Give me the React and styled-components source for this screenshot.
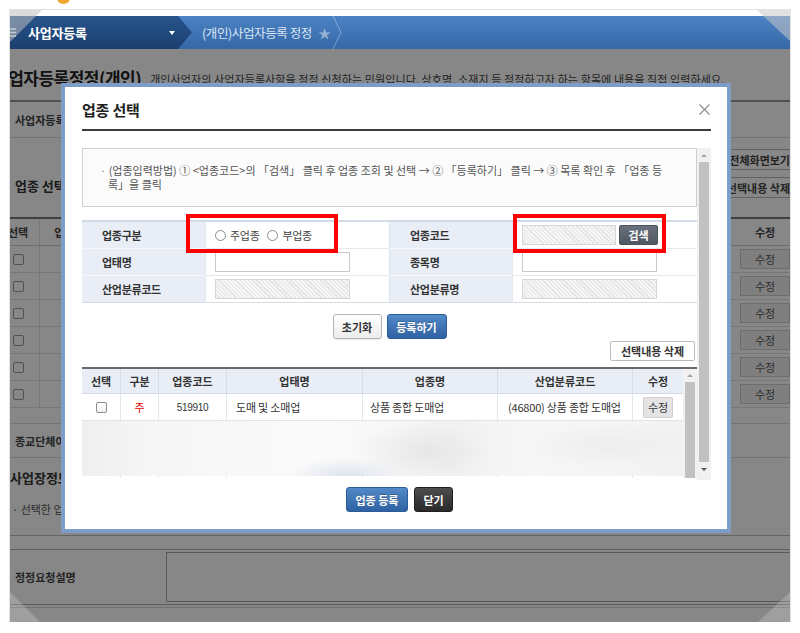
import React from 'react';
import styled, { createGlobalStyle, css } from 'styled-components';

const FONT = `'Noto Sans CJK KR', 'Noto Sans', 'Liberation Sans', sans-serif`;

const GlobalStyle = createGlobalStyle`
  html, body { margin: 0; padding: 0; background: #ffffff; }
  body { font-family: ${FONT}; color: #333; }
  *, *::before, *::after { box-sizing: border-box; }
  button { font-family: inherit; cursor: pointer; }
`;

const OrangeMark = styled.div`
  position: absolute;
  left: 57px;
  top: -8px;
  width: 13px;
  height: 12px;
  border-radius: 50%;
  background: #f2a533;
`;

const Frame = styled.div`
  position: relative;
  margin: 10px 0 0 10px;
  width: 780px;
  height: 612px;
  overflow: hidden;
  background: #fff;
  box-shadow: 0 0 0 1px #e2e2e2;
`;

const TopStrip = styled.div`
  height: 6px;
  background: #fff;
`;

/* ---------- header ---------- */
const HeaderBar = styled.div`
  display: flex;
  align-items: center;
  height: 33px;
  background: linear-gradient(#4b83c4, #3667a7);
`;

const MenuBlock = styled.div`
  display: flex;
  align-items: center;
  width: 182px;
  height: 100%;
  padding-right: 17px;
  background: linear-gradient(#27548c, #1b406f);
  clip-path: polygon(0 0, 168px 0, 182px 50%, 168px 100%, 0 100%);
  color: #fff;
`;

const Burger = styled.svg`
  margin-left: -4px;
  flex: none;
`;

const MenuTitle = styled.span`
  margin-left: 12px;
  font-size: 13px;
  font-weight: 700;
  letter-spacing: -0.2px;
`;

const Caret = styled.span`
  margin-left: auto;
  width: 0;
  height: 0;
  border-left: 3px solid transparent;
  border-right: 3px solid transparent;
  border-top: 4px solid #fff;
`;

const Crumb = styled.div`
  display: flex;
  align-items: center;
  height: 100%;
  margin-left: 10px;
  font-size: 12.5px;
  letter-spacing: -0.4px;
  color: #dbe6f4;
`;

const Star = styled.span`
  margin-left: 6px;
  font-size: 13px;
  color: rgba(255, 255, 255, 0.45);
`;

const CrumbChevron = styled.svg`
  margin-left: 1px;
  flex: none;
`;

/* ---------- background page ---------- */
const Page = styled.div`
  width: 790px;
  color: #444;
`;

const TitleRow = styled.div`
  display: flex;
  align-items: center;
  height: 53px;
  padding-top: 6px;
  border-bottom: 2px solid #9a9a9a;
`;

const PageTitle = styled.h1`
  margin: 0 0 0 -17px;
  font-size: 17px;
  font-weight: 700;
  letter-spacing: -0.5px;
  color: #222;
  white-space: nowrap;
`;

const PageDesc = styled.p`
  margin: 2px 0 0 9px;
  font-size: 11px;
  letter-spacing: 0.1px;
  white-space: nowrap;
  color: #444;
`;

const InfoRow = styled.div`
  display: flex;
  align-items: center;
  height: 36px;
  padding-left: 5px;
  border-bottom: 1px solid #dcdcdc;
`;

const RowLabel = styled.span`
  font-size: 11px;
  font-weight: 700;
  color: #444;
  white-space: nowrap;
`;

const SectionHead = styled.div`
  display: flex;
  justify-content: space-between;
  align-items: flex-start;
  height: 79px;
  padding: 11px 0 0 5px;
`;

const SectionTitle = styled.h2`
  margin: 28px 0 0;
  font-size: 13px;
  line-height: 18px;
  font-weight: 700;
  color: #333;
`;

const ButtonStack = styled.div`
  display: flex;
  flex-direction: column;
  align-items: flex-end;
  gap: 7px;
  margin-right: 3px;
`;

const GhostButton = styled.button`
  height: 21px;
  padding: 0 6px;
  border: 1px solid #b9b9b9;
  background: #fff;
  font-size: 11px;
  font-weight: 700;
  color: #444;
  white-space: nowrap;
`;

const BgGrid = styled.div`
  display: grid;
  grid-template-columns: 43px 70px 1fr 70px;
  width: 803px;
  margin-left: -13px;
  border-top: 2px solid #777;
`;

const BgCell = styled.div`
  display: flex;
  align-items: center;
  justify-content: center;
  height: 27px;
  border-bottom: 1px solid ${(p) => (p.$head ? '#cfcfcf' : '#e0e0e0')};
  border-right: ${(p) => (p.$last ? 'none' : '1px solid #e0e0e0')};
  font-size: 11px;
  font-weight: ${(p) => (p.$head ? 700 : 400)};
  color: #444;
`;

const BgCheck = styled.span`
  width: 11px;
  height: 11px;
  border: 1px solid #9a9a9a;
  border-radius: 2px;
  background: #fff;
`;

const BgEdit = styled.span`
  display: flex;
  align-items: center;
  justify-content: center;
  width: 50px;
  height: 20px;
  border: 1px solid #cfcfcf;
  background: #f0f0f0;
  font-size: 11px;
  color: #555;
`;

const ReligionRow = styled.div`
  display: flex;
  align-items: center;
  height: 35px;
  margin-top: 15px;
  padding-left: 5px;
  border-top: 1px solid #dcdcdc;
  border-bottom: 1px solid #dcdcdc;
`;

const SubTitle = styled.h3`
  margin: 0;
  height: 40px;
  line-height: 40px;
  font-size: 13px;
  font-weight: 700;
  color: #333;
`;

const BulletNote = styled.p`
  margin: 0;
  height: 22px;
  line-height: 22px;
  padding-left: 2px;
  font-size: 11px;
  color: #555;
  white-space: nowrap;
`;

const NoteSpacer = styled.div`
  height: 16px;
  border-bottom: 1px solid #bdbdbd;
`;

const ReqRow = styled.div`
  display: flex;
  align-items: center;
  height: 56px;
  margin-top: 13px;
  border-top: 1px solid #b0b0b0;
  border-bottom: 1px solid #b0b0b0;
`;

const ReqLabel = styled.span`
  width: 156px;
  padding-left: 5px;
  font-size: 11px;
  font-weight: 700;
  color: #444;
`;

const ReqBox = styled.div`
  flex: 1;
  height: 50px;
  border: 1px solid #a8a8a8;
  background: #fff;
`;

const BottomLine = styled.div`
  margin-top: 2px;
  border-top: 1px solid #d6d6d6;
`;

const Dim = styled.div`
  position: absolute;
  left: 0;
  right: 0;
  top: 39px;
  bottom: 0;
  background: rgba(0, 0, 0, 0.47);
`;

/* ---------- modal ---------- */
const Modal = styled.div`
  position: absolute;
  left: 51px;
  top: 73px;
  width: 670px;
  height: 450px;
  display: flex;
  flex-direction: column;
  padding: 0 16px 0 17px;
  border: 4px solid #7d9dc9;
  background: #fff;
`;

const ModalHeader = styled.div`
  display: flex;
  align-items: center;
  justify-content: space-between;
  height: 44px;
  padding-top: 2px;
  border-bottom: 2px solid #3c3c3c;
  flex: none;
`;

const ModalTitle = styled.h2`
  margin: 0;
  font-size: 15px;
  font-weight: 700;
  color: #222;
  letter-spacing: -0.2px;
`;

const CloseIcon = styled.svg`
  margin-right: 1px;
`;

const ScrollArea = styled.div`
  display: flex;
  height: 332px;
  margin-top: 17px;
  flex: none;
`;

const ScrollContent = styled.div`
  position: relative;
  display: flex;
  flex-direction: column;
  width: 615px;
`;

const InfoBox = styled.div`
  height: 59px;
  padding: 14px 10px 0 25px;
  border: 1px solid #cfcfcf;
  background: #fbfbfb;
  font-size: 11px;
  line-height: 14px;
  letter-spacing: 0;
  color: #555;
  text-indent: -8px;
  white-space: nowrap;
  flex: none;
`;

const Dot = styled.span`
  color: #999;
`;

const FormTable = styled.div`
  display: grid;
  grid-template-columns: 123px 184px 123px 185px;
  margin-top: 13px;
  border-top: 2px solid #d3dbe8;
  flex: none;
`;

const FormLabel = styled.div`
  display: flex;
  align-items: center;
  height: 27px;
  padding-left: 20px;
  background: #e9eef6;
  border-bottom: 1px solid ${(p) => (p.$end ? '#d6dce6' : '#f6f8fb')};
  border-left: ${(p) => (p.$second ? '1px solid #dde3ec' : 'none')};
  font-size: 11px;
  font-weight: 700;
  letter-spacing: -0.3px;
  color: #333;
`;

const FormValue = styled.div`
  display: flex;
  align-items: center;
  height: 27px;
  padding-left: 9px;
  border-bottom: 1px solid ${(p) => (p.$end ? '#d6dce6' : '#e6eaf0')};
  border-left: 1px solid #e3e8ef;
`;

const Radio = styled.span`
  width: 11px;
  height: 11px;
  border: 1px solid #8c8c8c;
  border-radius: 50%;
  background: #fff;
  margin-left: ${(p) => (p.$next ? '8px' : '0')};
  flex: none;
`;

const RadioText = styled.span`
  margin-left: 4px;
  font-size: 11px;
  letter-spacing: -0.3px;
  color: #444;
`;

const TextInput = styled.div`
  width: ${(p) => p.$w}px;
  height: 20px;
  border: 1px solid ${(p) => (p.$hatch ? '#d6d6d6' : '#c8c8c8')};
  background: ${(p) =>
    p.$hatch
      ? 'repeating-linear-gradient(45deg, #f5f5f5 0 2px, #e3e3e3 2px 3px)'
      : '#fff'};
`;

const SearchButton = styled.button`
  width: 39px;
  height: 20px;
  margin-left: 3px;
  padding: 0;
  border: 1px solid #4a525c;
  border-radius: 2px;
  background: linear-gradient(#67707c, #4f5762);
  color: #fff;
  font-size: 11px;
  font-weight: 700;
`;

const ActionRow = styled.div`
  display: flex;
  justify-content: center;
  gap: 5px;
  margin-top: 11px;
  flex: none;
`;

const btnBase = css`
  height: 25px;
  padding: 0;
  border-radius: 3px;
  font-size: 11px;
  font-weight: 700;
  letter-spacing: 0;
  white-space: nowrap;
`;

const LightButton = styled.button`
  ${btnBase};
  width: ${(p) => p.$w}px;
  border: 1px solid #b5b5b5;
  background: linear-gradient(#ffffff, #ececec);
  color: #333;
  box-shadow: 0 1px 1px rgba(0, 0, 0, 0.08);
`;

const BlueButton = styled.button`
  ${btnBase};
  width: ${(p) => p.$w}px;
  border: 1px solid #2b5b98;
  background: linear-gradient(#5289c8, #2f62a3);
  color: #fff;
  text-shadow: 0 -1px 0 rgba(0, 0, 0, 0.25);
`;

const DarkButton = styled.button`
  ${btnBase};
  width: ${(p) => p.$w}px;
  border: 1px solid #1f1f1f;
  background: linear-gradient(#4d4d4d, #2a2a2a);
  color: #fff;
`;

const DeleteRow = styled.div`
  display: flex;
  justify-content: flex-end;
  margin-top: 2px;
  padding-right: 2px;
  flex: none;
`;

const DeleteButton = styled.button`
  width: 85px;
  height: 20px;
  padding: 0;
  border: 1px solid #bcbcbc;
  border-radius: 2px;
  background: #fff;
  font-size: 11px;
  font-weight: 700;
  letter-spacing: 0;
  color: #333;
`;

const GridBox = styled.div`
  display: flex;
  height: 111px;
  margin-top: 6px;
  border-top: 2px solid #6a6a6a;
  flex: none;
`;

const GridMain = styled.div`
  display: flex;
  flex-direction: column;
  width: 601px;
`;

const COLS = '39px 38px 68px 136px 135px 135px 50px';

const GridRowBox = styled.div`
  display: grid;
  grid-template-columns: ${COLS};
  flex: none;
`;

const HeadCell = styled.div`
  display: flex;
  align-items: center;
  justify-content: center;
  height: 25px;
  background: #e9eef6;
  border-bottom: 1px solid #d3dae5;
  border-right: ${(p) => (p.$last ? 'none' : '1px solid #d7dde7')};
  font-size: 11px;
  font-weight: 700;
  color: #333;
`;

const DataCell = styled.div`
  display: flex;
  align-items: center;
  justify-content: ${(p) => (p.$left ? 'flex-start' : 'center')};
  height: ${(p) => (p.$h ? p.$h : 27)}px;
  padding-left: ${(p) => (p.$pad ? p.$pad : 0)}px;
  border-bottom: ${(p) => (p.$h ? 'none' : '1px solid #e0e4ea')};
  border-right: ${(p) => (p.$last ? 'none' : '1px solid #e3e7ed')};
  font-size: 11px;
  letter-spacing: -0.2px;
  color: ${(p) => (p.$red ? '#e60000' : '#333')};
  white-space: nowrap;
`;

const Code = styled.span`
  font-family: 'Liberation Sans', sans-serif;
  font-size: 10px;
  letter-spacing: -0.3px;
  color: #333;
`;

const CheckBox = styled.span`
  width: 11px;
  height: 11px;
  border: 1px solid #8e8e8e;
  border-radius: 2px;
  background: linear-gradient(#fff, #f0f0f0);
`;

const EditButton = styled.button`
  width: 30px;
  height: 21px;
  padding: 0;
  border: 1px solid #d0d0d0;
  border-radius: 2px;
  background: #e4e4e4;
  font-size: 11px;
  color: #333;
`;

const BlurBand = styled.div`
  height: 55px;
  flex: none;
  background:
    radial-gradient(60px 18px at 44% 100%, rgba(205, 213, 230, 0.6), rgba(255, 255, 255, 0)),
    radial-gradient(70px 30px at 57% 55%, rgba(222, 222, 222, 0.6), rgba(255, 255, 255, 0)),
    radial-gradient(100px 22px at 88% 45%, rgba(230, 230, 230, 0.5), rgba(255, 255, 255, 0)),
    linear-gradient(90deg, #efefef 0%, #f6f6f6 12%, #fafafa 38%, #f7f8f9 50%, #f1f1f1 62%, #f7f7f7 75%, #f2f2f2 100%);
`;

const ScrollTrack = styled.div`
  display: flex;
  flex-direction: column;
  width: 14px;
  padding-bottom: ${(p) => (p.$pb ? p.$pb : 0)}px;
  background: #f1f1f1;
  flex: none;
`;

const ScrollArrow = styled.div`
  display: flex;
  align-items: center;
  justify-content: center;
  height: ${(p) => (p.$h ? p.$h : 14)}px;
  flex: none;
  &::after {
    content: '';
    width: 0;
    height: 0;
    border-left: 3px solid transparent;
    border-right: 3px solid transparent;
    ${(p) =>
      p.$down
        ? 'border-top: 3px solid #555;'
        : 'border-bottom: 3px solid #a5a5a5;'}
  }
`;

const ScrollThumb = styled.div`
  flex: 1;
  margin: 0 2px;
  background: #c1c1c1;
`;

const RedMark = styled.div`
  position: absolute;
  left: ${(p) => p.$x}px;
  top: ${(p) => p.$y}px;
  width: ${(p) => p.$w}px;
  height: ${(p) => p.$h}px;
  border: 4px solid #ff0000;
  pointer-events: none;
`;

const FooterButtons = styled.div`
  display: flex;
  justify-content: center;
  gap: 6px;
  margin-top: 7px;
  padding-left: 6px;
  flex: none;
`;

/* ---------- page curl corners ---------- */
const Curl = styled.div`
  position: absolute;
  z-index: 5;
  pointer-events: none;
  ${(p) => p.$pos}
`;

const gridRows = [0, 1, 2, 3, 4, 5];

export default function App() {
  return (
    <>
      <GlobalStyle />
      <OrangeMark />
      <Frame>
        <TopStrip />
        <HeaderBar>
          <MenuBlock>
            <Burger width="10" height="9" viewBox="0 0 10 9">
              <path d="M0 1h10M0 4.5h10M0 8h10" stroke="#c9d6e8" strokeWidth="1.4" />
            </Burger>
            <MenuTitle>사업자등록</MenuTitle>
            <Caret />
          </MenuBlock>
          <Crumb>
            (개인)사업자등록 정정
            <Star>★</Star>
            <CrumbChevron width="10" height="33" viewBox="0 0 10 33">
              <path d="M1 0 L9 16.5 L1 33" fill="none" stroke="rgba(255,255,255,0.35)" strokeWidth="1" />
            </CrumbChevron>
          </Crumb>
        </HeaderBar>

        <Page>
          <TitleRow>
            <PageTitle>사업자등록정정(개인)</PageTitle>
            <PageDesc>
              개인사업자의 사업자등록사항을 정정 신청하는 민원입니다. 상호명, 소재지 등 정정하고자 하는 항목에 내용을 직접 입력하세요.
            </PageDesc>
          </TitleRow>
          <InfoRow>
            <RowLabel>사업자등록번호</RowLabel>
          </InfoRow>
          <SectionHead>
            <SectionTitle>업종 선택</SectionTitle>
            <ButtonStack>
              <GhostButton>전체화면보기</GhostButton>
              <GhostButton>선택내용 삭제</GhostButton>
            </ButtonStack>
          </SectionHead>
          <BgGrid>
            <BgCell $head>선택</BgCell>
            <BgCell $head>업종코드</BgCell>
            <BgCell $head>업태명</BgCell>
            <BgCell $head $last>수정</BgCell>
            {gridRows.map((r) => (
              <React.Fragment key={r}>
                <BgCell><BgCheck /></BgCell>
                <BgCell />
                <BgCell />
                <BgCell $last><BgEdit>수정</BgEdit></BgCell>
              </React.Fragment>
            ))}
          </BgGrid>
          <ReligionRow>
            <RowLabel>종교단체여부</RowLabel>
          </ReligionRow>
          <SubTitle>사업장정보</SubTitle>
          <BulletNote>· 선택한 업종에 따라 입력 항목이 달라질 수 있습니다.</BulletNote>
          <NoteSpacer />
          <ReqRow>
            <ReqLabel>정정요청설명</ReqLabel>
            <ReqBox />
          </ReqRow>
          <BottomLine />
        </Page>

        <Dim />

        <Modal>
          <ModalHeader>
            <ModalTitle>업종 선택</ModalTitle>
            <CloseIcon width="11" height="11" viewBox="0 0 11 11">
              <path d="M0.5 0.5 L10.5 10.5 M10.5 0.5 L0.5 10.5" stroke="#8a8a8a" strokeWidth="1.1" />
            </CloseIcon>
          </ModalHeader>

          <ScrollArea>
            <ScrollContent>
              <InfoBox>
                <Dot>·</Dot> (업종입력방법) ① &lt;업종코드&gt;의 「검색」 클릭 후 업종 조회 및 선택 → ② 「등록하기」 클릭 → ③ 목록 확인 후 「업종 등
                <br />
                록」을 클릭
              </InfoBox>

              <FormTable>
                <FormLabel>업종구분</FormLabel>
                <FormValue>
                  <Radio />
                  <RadioText>주업종</RadioText>
                  <Radio $next />
                  <RadioText>부업종</RadioText>
                </FormValue>
                <FormLabel $second>업종코드</FormLabel>
                <FormValue>
                  <TextInput $w={94} $hatch />
                  <SearchButton>검색</SearchButton>
                </FormValue>

                <FormLabel>업태명</FormLabel>
                <FormValue>
                  <TextInput $w={135} />
                </FormValue>
                <FormLabel $second>종목명</FormLabel>
                <FormValue>
                  <TextInput $w={135} />
                </FormValue>

                <FormLabel $end>산업분류코드</FormLabel>
                <FormValue $end>
                  <TextInput $w={135} $hatch />
                </FormValue>
                <FormLabel $end $second>산업분류명</FormLabel>
                <FormValue $end>
                  <TextInput $w={135} $hatch />
                </FormValue>
              </FormTable>

              <ActionRow>
                <LightButton $w={49}>초기화</LightButton>
                <BlueButton $w={60}>등록하기</BlueButton>
              </ActionRow>

              <DeleteRow>
                <DeleteButton>선택내용 삭제</DeleteButton>
              </DeleteRow>

              <GridBox>
                <GridMain>
                  <GridRowBox>
                    <HeadCell>선택</HeadCell>
                    <HeadCell>구분</HeadCell>
                    <HeadCell>업종코드</HeadCell>
                    <HeadCell>업태명</HeadCell>
                    <HeadCell>업종명</HeadCell>
                    <HeadCell>산업분류코드</HeadCell>
                    <HeadCell $last>수정</HeadCell>
                  </GridRowBox>
                  <GridRowBox>
                    <DataCell><CheckBox /></DataCell>
                    <DataCell $red>주</DataCell>
                    <DataCell><Code>519910</Code></DataCell>
                    <DataCell $left $pad={9}>도매 및 소매업</DataCell>
                    <DataCell $left $pad={7}>상품 종합 도매업</DataCell>
                    <DataCell $left $pad={10}>(46800) 상품 종합 도매업</DataCell>
                    <DataCell $last><EditButton>수정</EditButton></DataCell>
                  </GridRowBox>
                  <BlurBand />
                  <GridRowBox>
                    <DataCell $h={2} />
                    <DataCell $h={2} />
                    <DataCell $h={2} />
                    <DataCell $h={2} />
                    <DataCell $h={2} />
                    <DataCell $h={2} />
                    <DataCell $h={2} $last />
                  </GridRowBox>
                </GridMain>
                <ScrollTrack>
                  <ScrollArrow $h={13} />
                  <ScrollThumb />
                </ScrollTrack>
              </GridBox>

              <RedMark $x={104} $y={66} $w={152} $h={39} />
              <RedMark $x={431} $y={66} $w={153} $h={39} />
            </ScrollContent>

            <ScrollTrack $pb={4}>
              <ScrollArrow />
              <ScrollThumb />
              <ScrollArrow $down />
            </ScrollTrack>
          </ScrollArea>

          <FooterButtons>
            <BlueButton $w={62}>업종 등록</BlueButton>
            <DarkButton $w={39}>닫기</DarkButton>
          </FooterButtons>
        </Modal>

        <Curl
          $pos={`left:0;top:0;width:32px;height:32px;background:rgba(190,190,190,0.55);clip-path:polygon(0 0,100% 0,0 100%);`}
        />
        <Curl
          $pos={`left:747px;top:0;width:33px;height:31px;background:rgba(200,200,200,0.55);clip-path:polygon(0 0,100% 0,100% 100%);`}
        />
        <Curl
          $pos={`left:0;top:582px;width:30px;height:30px;background:rgba(255,255,255,0.2);clip-path:polygon(0 0,100% 100%,0 100%);`}
        />
        <Curl
          $pos={`left:748px;top:582px;width:32px;height:30px;background:rgba(255,255,255,0.2);clip-path:polygon(100% 0,100% 100%,0 100%);`}
        />
      </Frame>
    </>
  );
}
